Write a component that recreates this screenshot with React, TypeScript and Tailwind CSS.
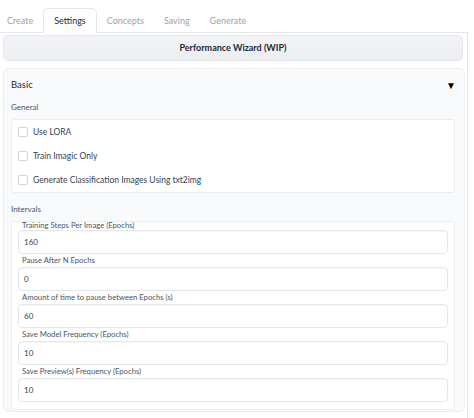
const tabs = ["Create", "Settings", "Concepts", "Saving", "Generate"];

const checks = ["Use LORA", "Train Imagic Only", "Generate Classification Images Using txt2img"];

const fields = [
  { label: "Training Steps Per Image (Epochs)", value: "160" },
  { label: "Pause After N Epochs", value: "0" },
  { label: "Amount of time to pause between Epochs (s)", value: "60" },
  { label: "Save Model Frequency (Epochs)", value: "10" },
  { label: "Save Preview(s) Frequency (Epochs)", value: "10" },
];

export default function App() {
  return (
    <div className="w-[474px] h-[418px] bg-white overflow-hidden text-[#374151]" style={{ fontFamily: "Lato, 'Noto Sans', sans-serif" }}>
      {/* Tabs */}
      <div className="flex h-[33px] pt-[8px] w-[468px] border-b border-[#e5e7eb]">
        <div className="flex -ml-[3px]">
          {tabs.map((t) => (
            <div
              key={t}
              className={
                t === "Settings"
                  ? "h-[25px] px-[10px] flex items-center text-[9px] text-[#1f2937] bg-white border border-[#e5e7eb] border-b-white rounded-t-[5px] -mb-px"
                  : "h-[25px] px-[10px] flex items-center text-[9px] text-[#9ca3af]"
              }
            >
              {t}
            </div>
          ))}
        </div>
      </div>

      {/* Tab panel */}
      <div className="w-[468px] h-[385px] border-r border-[#e5e7eb] pl-[3px] pr-[4px] pt-[2px]">
        <div className="h-[26px] w-[460px] rounded-[5px] border border-[#e5e7eb] bg-gradient-to-b from-[#f3f4f6] to-[#eceef1] flex items-center justify-center text-[9px] font-bold text-[#1f2937]">
          Performance Wizard (WIP)
        </div>

        <div className="mt-[7px] w-[462px] h-[344px] rounded-[5px] border border-[#eceef0] bg-[#f9fafb] px-[7px]">
          <div className="flex items-center justify-between h-[32px]">
            <span className="text-[9.5px] text-[#1f2937]">Basic</span>
            <span className="text-[10px] text-black pr-[1px]">▼</span>
          </div>
          <div className="text-[8px] text-[#4b5563] h-[12px] leading-[12px]">General</div>

          <div className="mt-[6px] w-[444px] h-[74px] bg-white border border-[#eceef0] rounded-[3px] px-[6px] flex flex-col">
            {checks.map((c) => (
              <div key={c} className="h-[24px] flex items-center gap-[5px]">
                <div className="w-[10px] h-[10px] border border-[#d1d5db] rounded-[2px] bg-white" />
                <span className="text-[8.5px] text-[#374151]">{c}</span>
              </div>
            ))}
          </div>

          <div className="text-[8px] text-[#4b5563] h-[28px] pt-[10px] leading-[12px]">Intervals</div>

          <div className="w-[444px] h-[189px] bg-white border border-[#eceef0] rounded-[3px] pl-[6px] pr-[7px] flex flex-col">
            {fields.map((f, i) => (
              <div key={f.label} className="flex flex-col">
                <div
                  className={
                    i === 0
                      ? "h-[8px] flex items-center pl-[4px] text-[7.7px] text-[#4b5563] leading-none"
                      : "h-[13px] flex items-center pl-[4px] text-[7.7px] text-[#4b5563] leading-none"
                  }
                >
                  {f.label}
                </div>
                <div className="h-[24px] w-[430px] border border-[#e5e7eb] rounded-[4px] flex items-center pl-[5px] text-[8px] text-[#374151] shadow-[inset_0_1px_1px_rgba(0,0,0,0.03)]">
                  {f.value}
                </div>
              </div>
            ))}
          </div>
        </div>
      </div>
    </div>
  );
}
